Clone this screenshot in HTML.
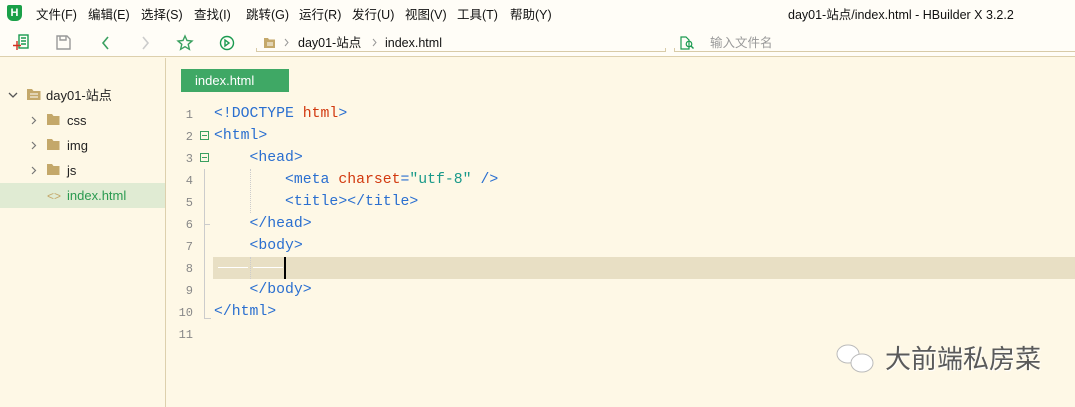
<!DOCTYPE html>
<html><head><meta charset="utf-8"><style>
*{margin:0;padding:0;box-sizing:border-box}
body{width:1075px;height:407px;overflow:hidden;background:#fef8e6;font-family:"Liberation Sans","Noto Sans CJK SC",sans-serif;position:relative;color:#222}
.abs{position:absolute}
#top{position:absolute;left:0;top:0;width:1075px;height:57px;background:#fffdf7;border-bottom:1px solid #ddd0ad}
.menu{position:absolute;top:7px;font-size:12.5px;color:#111;white-space:nowrap;line-height:16px;height:16px}
.code{font-family:"Liberation Mono",monospace;font-size:14.8px;white-space:pre;position:absolute;left:214px;line-height:22px;height:22px}
.ln{position:absolute;width:30px;left:163px;text-align:right;font-family:"Liberation Mono",monospace;font-size:12px;color:#888;line-height:22px}
.t{color:#2a6fd0}.r{color:#d23a10}.s{color:#1a9a8a}
.side{position:absolute;font-size:13px;color:#222;line-height:16px;height:16px;white-space:nowrap}
.fold{position:absolute;left:200px;width:9px;height:9px;border:1px solid #3aa060}
.fold:after{content:"";position:absolute;left:1px;top:3px;width:5px;height:1px;background:#3aa060}
</style></head><body>
<div id="top">
<div class="abs" style="left:7px;top:5px;width:15px;height:16px;background:#1aa048;border-radius:2px 2px 6px 6px;color:#fff;font-size:11px;font-weight:bold;text-align:center;line-height:16px">H</div>
<span class="menu" style="left:36px">文件(F)</span>
<span class="menu" style="left:88px">编辑(E)</span>
<span class="menu" style="left:141px">选择(S)</span>
<span class="menu" style="left:194px">查找(I)</span>
<span class="menu" style="left:246px">跳转(G)</span>
<span class="menu" style="left:299px">运行(R)</span>
<span class="menu" style="left:352px">发行(U)</span>
<span class="menu" style="left:405px">视图(V)</span>
<span class="menu" style="left:457px">工具(T)</span>
<span class="menu" style="left:510px">帮助(Y)</span>
<span class="menu" style="left:788px">day01-站点/index.html - HBuilder X 3.2.2</span>
<svg class="abs" style="left:0;top:27px" width="700" height="30">
<g fill="none" stroke-width="1.4">
<rect x="19" y="8" width="9" height="13" stroke="#1a9a50"/><path d="M21 11h5M21 14h5M21 17h5" stroke="#1a9a50"/><path d="M17 14v9M13 18.5h8" stroke="#d03020"/>
<path d="M57 9h10l3 3v10H57z M60 9v4h6V9" stroke="#999"/>
<path d="M108 10l-5 6 5 6" stroke="#3aa060" stroke-width="1.6"/>
<path d="M143 10l5 6-5 6" stroke="#ccc" stroke-width="1.6"/>
<path d="M185 9l2 4.5 5 .5-3.8 3.3 1.2 5-4.4-2.6-4.4 2.6 1.2-5L178 14l5-.5z" stroke="#3aa060"/>
<circle cx="227" cy="16" r="6.5" stroke="#1a9a50"/><path d="M225 13v6l4-3z" stroke="#1a9a50"/>
</g>
<path d="M264 11h4l1 1.5h6v8.5h-11z" fill="#c4a86a"/><path d="M267 16h6M267 18h6" stroke="#fff"/>
<path d="M285 12l3 3.5-3 3.5M373 12l3 3.5-3 3.5" fill="none" stroke="#999"/>
<path d="M256.5 21v3.5h409v-3.5M674.5 21v3.5H700" fill="none" stroke="#d8cba8"/>
<path d="M681 10h5l3 3v9h-8z" fill="none" stroke="#1a9a50" stroke-width="1.2"/><circle cx="689" cy="17" r="2.8" fill="none" stroke="#1a9a50" stroke-width="1.2"/><path d="M691 19l2.5 2.5" stroke="#1a9a50" stroke-width="1.4"/>
</svg>
<span class="menu" style="left:298px;top:35px">day01-站点</span>
<span class="menu" style="left:385px;top:35px">index.html</span>
<span class="menu" style="left:710px;top:35px;color:#999">输入文件名</span>
<div class="abs" style="left:674px;top:51px;width:401px;height:1px;background:#d8cba8"></div>
</div>
<div class="abs" style="left:165px;top:58px;width:1px;height:349px;background:#ddd0ad"></div>
<svg class="abs" style="left:0;top:80px" width="165" height="130">
<path d="M9 13l4 4 4-4" fill="none" stroke="#555" stroke-width="1.3"/>
<path d="M27 9h5l1.5 2h7v9h-13.5z" fill="#c4a86a"/><path d="M30 14h8M30 17h8" stroke="#fff"/>
<g fill="none" stroke="#777" stroke-width="1.2"><path d="M32 37l3.5 3.5-3.5 3.5M32 62l3.5 3.5-3.5 3.5M32 87l3.5 3.5-3.5 3.5"/></g>
<g fill="#c4a86a"><path d="M47 34h5l1.5 2h6v9h-12.5z"/><path d="M47 59h5l1.5 2h6v9h-12.5z"/><path d="M47 84h5l1.5 2h6v9h-12.5z"/></g>
</svg>
<span class="side" style="left:46px;top:88px">day01-站点</span>
<span class="side" style="left:67px;top:113px">css</span>
<span class="side" style="left:67px;top:138px">img</span>
<span class="side" style="left:67px;top:163px">js</span>
<div class="abs" style="left:0;top:183px;width:165px;height:25px;background:#e0ebd3"></div>
<span class="side" style="left:47px;top:188px;color:#c4a86a;font-size:12px">&lt;&gt;</span>
<span class="side" style="left:67px;top:188px;color:#2a9a50">index.html</span>
<div class="abs" style="left:181px;top:69px;width:108px;height:23px;background:#3fa865;color:#fff;font-size:13px;line-height:23px;padding-left:14px">index.html</div>
<div class="abs" style="left:213px;top:257px;width:862px;height:22px;background:#e8dfc4"></div>
<div class="abs" style="left:218px;top:267px;width:30px;height:1px;background:#fff"></div>
<div class="abs" style="left:253px;top:267px;width:30px;height:1px;background:#fff"></div>
<div class="abs" style="left:284px;top:257px;width:2px;height:22px;background:#000"></div>
<div class="abs" style="left:204px;top:169px;width:1px;height:150px;background:#ccc"></div>
<div class="abs" style="left:204px;top:318px;width:7px;height:1px;background:#ccc"></div>
<div class="abs" style="left:204px;top:224px;width:6px;height:1px;background:#ccc"></div>
<div class="abs" style="left:250px;top:169px;width:0;height:44px;border-left:1px dotted #ccc"></div>
<div class="abs" style="left:250px;top:257px;width:0;height:22px;border-left:1px dotted #ccc"></div>
<div class="fold" style="top:131px"></div>
<div class="fold" style="top:153px"></div>
<div class="ln" style="top:104px">1</div><div class="ln" style="top:126px">2</div><div class="ln" style="top:148px">3</div><div class="ln" style="top:170px">4</div><div class="ln" style="top:192px">5</div><div class="ln" style="top:214px">6</div><div class="ln" style="top:236px">7</div><div class="ln" style="top:258px">8</div><div class="ln" style="top:280px">9</div><div class="ln" style="top:302px">10</div><div class="ln" style="top:324px">11</div>
<div class="code" style="top:103px"><span class="t">&lt;!DOCTYPE </span><span class="r">html</span><span class="t">&gt;</span></div>
<div class="code t" style="top:125px">&lt;html&gt;</div>
<div class="code t" style="top:147px">    &lt;head&gt;</div>
<div class="code" style="top:169px"><span class="t">        &lt;meta </span><span class="r">charset</span><span class="t">=</span><span class="s">"utf-8"</span><span class="t"> /&gt;</span></div>
<div class="code t" style="top:191px">        &lt;title&gt;&lt;/title&gt;</div>
<div class="code t" style="top:213px">    &lt;/head&gt;</div>
<div class="code t" style="top:235px">    &lt;body&gt;</div>
<div class="code t" style="top:279px">    &lt;/body&gt;</div>
<div class="code t" style="top:301px">&lt;/html&gt;</div>
<svg class="abs" style="left:835px;top:342px" width="45" height="36">
<ellipse cx="13" cy="12" rx="11" ry="9" fill="#fff" stroke="#bbb"/>
<ellipse cx="27" cy="21" rx="11" ry="9" fill="#fff" stroke="#bbb"/>
</svg>
<span class="abs" style="left:885px;top:343px;font-size:26px;line-height:32px;color:#5a5a5a;text-shadow:1px 1px 1px #fff;white-space:nowrap">大前端私房菜</span>
</body></html>
